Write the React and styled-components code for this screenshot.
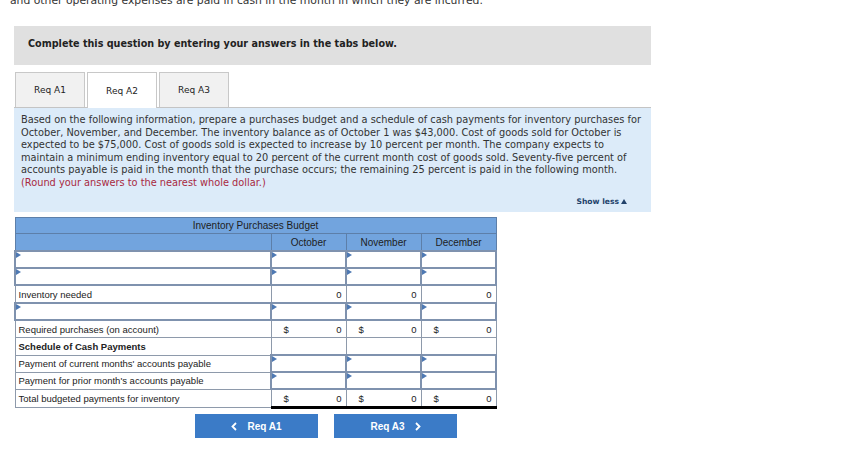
import React from 'react';
import styled, { createGlobalStyle } from 'styled-components';

const GlobalStyle = createGlobalStyle`
  html, body {
    margin: 0;
    padding: 0;
    background: #fff;
    overflow: hidden;
  }
  body {
    font-family: Verdana, "DejaVu Sans", sans-serif;
    color: #222;
  }
`;

const Page = styled.div`
  width: 637px;
  padding-left: 14px;
`;

const Intro = styled.p`
  margin: -5px 0 0 -4px;
  font-size: 10.8px;
  line-height: 12px;
  color: #333;
  white-space: nowrap;
`;

const Instructions = styled.div`
  margin-top: 19px;
  height: 39px;
  display: flex;
  align-items: center;
  padding: 0 0 4px 14px;
  box-sizing: border-box;
  background: #e0e0e0;
  font-size: 9.65px;
  font-weight: bold;
  color: #222;
`;

const TabBar = styled.div`
  margin-top: 7px;
  display: flex;
  gap: 2px;
  padding-left: 1px;
  border-bottom: 1px solid #c4c4c4;
`;

const Tab = styled.div`
  width: 68px;
  height: ${(p) => (p.$active ? 35 : 34)}px;
  margin-bottom: ${(p) => (p.$active ? '-1px' : '0')};
  display: flex;
  align-items: center;
  justify-content: center;
  background: ${(p) => (p.$active ? '#fff' : '#f1f1f1')};
  border: 1px solid #c8c8c8;
  border-bottom: none;
  font-size: 9px;
  color: #222;
`;

const InfoPanel = styled.div`
  background: #dcebf9;
  padding: 6px 8px 6px 7px;
  height: 92px;
  display: flex;
  flex-direction: column;
`;

const InfoText = styled.p`
  margin: 0;
  font-size: 9.8px;
  line-height: 12.5px;
  color: #333;
  white-space: nowrap;
`;

const Note = styled.span`
  color: #a8293f;
`;

const ShowLess = styled.div`
  margin-top: auto;
  align-self: flex-end;
  padding-right: 16px;
  font-size: 7.6px;
  font-weight: bold;
  color: #22426b;
  display: flex;
  align-items: center;
  gap: 2px;
`;

const Table = styled.table`
  margin-top: 5px;
  border-collapse: collapse;
  width: 481px;
  table-layout: fixed;
  font-family: Arial, "Liberation Sans", sans-serif;
  font-size: 9.5px;
  color: #222;
`;

const HeadCell = styled.th`
  background: #72a4de;
  border: 1px solid #5d7fa9;
  height: ${(p) => (p.$tall ? 16 : 15)}px;
  padding: 0 2px;
  font-weight: normal;
  font-size: 10px;
  text-align: center;
  color: #1d1d1d;
`;

const LabelCell = styled.td`
  border: 1px solid #8e9aab;
  height: 16px;
  padding: 0 3px;
  font-weight: ${(p) => (p.$bold ? 'bold' : 'normal')};
  white-space: nowrap;
  background: #fff;
`;

const InputCell = styled.td`
  position: relative;
  border: 2px solid #7f92ae;
  height: 15px;
  padding: 0;
  background: #fff;

  &::before {
    content: '';
    position: absolute;
    left: 0;
    top: 0;
    border-left: 5px solid #4e79b3;
    border-top: 3px solid transparent;
    border-bottom: 3px solid transparent;
  }
`;

const ValueCell = styled.td`
  border: 1px solid #8e9aab;
  border-top: 2px solid #000;
  border-bottom: ${(p) => (p.$total ? '3px solid #000' : '1px solid #8e9aab')};
  height: 16px;
  padding: 0 4px 0 12px;
  background: #fff;
`;

const Amount = styled.div`
  display: flex;
  justify-content: ${(p) => (p.$dollar ? 'space-between' : 'flex-end')};
`;

const Buttons = styled.div`
  margin-top: 5px;
  display: flex;
  gap: 16px;
  padding-left: 181px;
`;

const NavButton = styled.div`
  width: 123px;
  height: 24px;
  display: flex;
  align-items: center;
  justify-content: center;
  gap: 10px;
  background: #3b7bc7;
  color: #fff;
  font-family: Arial, "Liberation Sans", sans-serif;
  font-size: 10px;
  font-weight: bold;
`;

const Chevron = ({ dir }) => (
  <svg width="6" height="9" viewBox="0 0 6 9">
    <polyline
      points={dir === 'left' ? '5,1 1.5,4.5 5,8' : '1,1 4.5,4.5 1,8'}
      fill="none"
      stroke="#fff"
      strokeWidth="1.8"
    />
  </svg>
);

const Value = ({ dollar, total }) => (
  <ValueCell $total={total}>
    <Amount $dollar={dollar}>
      {dollar && <span>$</span>}
      <span>0</span>
    </Amount>
  </ValueCell>
);

const BlankRow = () => (
  <tr>
    <InputCell />
    <InputCell />
    <InputCell />
    <InputCell />
  </tr>
);

const LabelInputRow = ({ label }) => (
  <tr>
    <LabelCell>{label}</LabelCell>
    <InputCell />
    <InputCell />
    <InputCell />
  </tr>
);

const ValueRow = ({ label, dollar, total }) => (
  <tr>
    <LabelCell>{label}</LabelCell>
    <Value dollar={dollar} total={total} />
    <Value dollar={dollar} total={total} />
    <Value dollar={dollar} total={total} />
  </tr>
);

const App = () => (
  <Page>
    <GlobalStyle />
    <Intro>and other operating expenses are paid in cash in the month in which they are incurred.</Intro>
    <Instructions>Complete this question by entering your answers in the tabs below.</Instructions>
    <TabBar>
      <Tab>Req A1</Tab>
      <Tab $active>Req A2</Tab>
      <Tab>Req A3</Tab>
    </TabBar>
    <InfoPanel>
      <InfoText>
        Based on the following information, prepare a purchases budget and a schedule of cash payments for inventory purchases for
        <br />
        October, November, and December. The inventory balance as of October 1 was $43,000. Cost of goods sold for October is
        <br />
        expected to be $75,000. Cost of goods sold is expected to increase by 10 percent per month. The company expects to
        <br />
        maintain a minimum ending inventory equal to 20 percent of the current month cost of goods sold. Seventy-five percent of
        <br />
        accounts payable is paid in the month that the purchase occurs; the remaining 25 percent is paid in the following month.
        <br />
        <Note>(Round your answers to the nearest whole dollar.)</Note>
      </InfoText>
      <ShowLess>
        Show less
        <svg width="6" height="5" viewBox="0 0 6 5">
          <polygon points="3,0 6,5 0,5" fill="#22426b" />
        </svg>
      </ShowLess>
    </InfoPanel>
    <Table>
      <colgroup>
        <col style={{ width: 256 }} />
        <col style={{ width: 75 }} />
        <col style={{ width: 75 }} />
        <col style={{ width: 75 }} />
      </colgroup>
      <thead>
        <tr>
          <HeadCell colSpan={4}>Inventory Purchases Budget</HeadCell>
        </tr>
        <tr>
          <HeadCell $tall />
          <HeadCell $tall>October</HeadCell>
          <HeadCell $tall>November</HeadCell>
          <HeadCell $tall>December</HeadCell>
        </tr>
      </thead>
      <tbody>
        <BlankRow />
        <BlankRow />
        <ValueRow label="Inventory needed" />
        <BlankRow />
        <ValueRow label="Required purchases (on account)" dollar />
        <tr>
          <LabelCell $bold>Schedule of Cash Payments</LabelCell>
          <LabelCell />
          <LabelCell />
          <LabelCell />
        </tr>
        <LabelInputRow label="Payment of current months' accounts payable" />
        <LabelInputRow label="Payment for prior month's accounts payable" />
        <ValueRow label="Total budgeted payments for inventory" dollar total />
      </tbody>
    </Table>
    <Buttons>
      <NavButton>
        <Chevron dir="left" />
        Req A1
      </NavButton>
      <NavButton>
        Req A3
        <Chevron dir="right" />
      </NavButton>
    </Buttons>
  </Page>
);

export default App;
